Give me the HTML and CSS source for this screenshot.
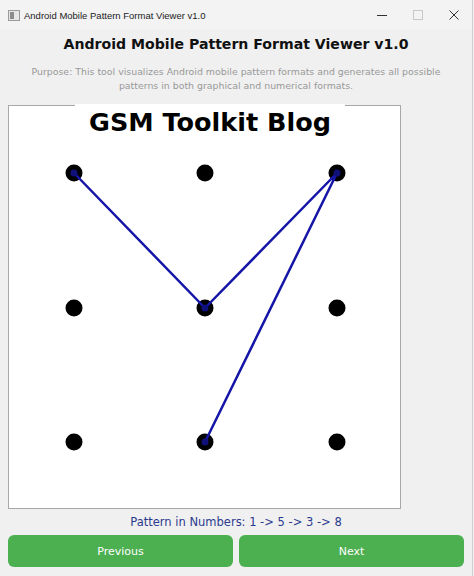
FILE: index.html
```html
<!DOCTYPE html>
<html>
<head>
<meta charset="utf-8">
<link rel="stylesheet" href="styles.css">
</head>
<body>
<div class="window">
  <div class="titlebar">
    <div class="app">
      <svg class="app-icon" width="12" height="11" viewBox="0 0 12 11">
        <rect x="0.5" y="0.5" width="11" height="10" fill="#e6e6e6" stroke="#9a9a9a"/>
        <rect x="2" y="2" width="4" height="7" fill="#8c8c8c"/>
      </svg>
      <span class="app-title">Android Mobile Pattern Format Viewer v1.0</span>
    </div>
    <div class="controls">
      <span class="ctl"><svg width="10" height="10" viewBox="0 0 10 10"><line x1="0" y1="5.5" x2="10" y2="5.5" stroke="#333" stroke-width="1"/></svg></span>
      <span class="ctl"><svg width="10" height="10" viewBox="0 0 10 10"><rect x="0.5" y="0.5" width="9" height="9" fill="none" stroke="#c8c8c8" stroke-width="1"/></svg></span>
      <span class="ctl"><svg width="10" height="10" viewBox="0 0 10 10"><path d="M0.5 0.5 L9.5 9.5 M9.5 0.5 L0.5 9.5" stroke="#333" stroke-width="1"/></svg></span>
    </div>
  </div>
  <div class="content">
    <h1 class="heading">Android Mobile Pattern Format Viewer v1.0</h1>
    <p class="purpose">Purpose: This tool visualizes Android mobile pattern formats and generates all possible patterns in both graphical and numerical formats.</p>
    <div class="canvas">
      <div class="watermark">GSM Toolkit Blog</div>
      <svg class="pattern" width="391" height="402" viewBox="0 0 391 402">
        <g fill="#000">
          <circle cx="65" cy="67" r="8.5"/>
          <circle cx="196" cy="67" r="8.5"/>
          <circle cx="328" cy="67" r="8.5"/>
          <circle cx="65" cy="202" r="8.5"/>
          <circle cx="196" cy="202" r="8.5"/>
          <circle cx="328" cy="202" r="8.5"/>
          <circle cx="65" cy="336" r="8.5"/>
          <circle cx="196" cy="336" r="8.5"/>
          <circle cx="328" cy="336" r="8.5"/>
        </g>
        <polyline points="65,67 196,202 328,67 196,336" fill="none" stroke="#1515a8" stroke-width="2.5" stroke-linejoin="round" stroke-linecap="round"/>
        <g fill="#10107a">
          <circle cx="65" cy="67" r="3.5"/>
          <circle cx="196" cy="202" r="3.5"/>
          <circle cx="328" cy="67" r="3.5"/>
          <circle cx="196" cy="336" r="3.5"/>
        </g>
      </svg>
    </div>
    <div class="numbers">Pattern in Numbers: 1 -&gt; 5 -&gt; 3 -&gt; 8</div>
    <div class="buttons">
      <button class="btn">Previous</button>
      <button class="btn">Next</button>
    </div>
  </div>
</div>
</body>
</html>
```
FILE: styles.css
```css
html, body {
  margin: 0;
  padding: 0;
  background: #f0f0f0;
}
.window {
  width: 472px;
  height: 576px;
  border-right: 1px solid #cfcfcf;
  background: #f0f0f0;
  overflow: hidden;
  font-family: "DejaVu Sans", Verdana, sans-serif;
}
.titlebar {
  height: 30px;
  display: flex;
  align-items: center;
  justify-content: space-between;
  background: #f3f3f3;
}
.app {
  display: flex;
  align-items: center;
  padding-left: 8px;
  gap: 4px;
}
.app-title {
  font-family: "Liberation Sans", Arial, sans-serif;
  font-size: 9.5px;
  color: #222;
}
.controls {
  display: flex;
  height: 30px;
}
.ctl {
  width: 36px;
  display: flex;
  align-items: center;
  justify-content: center;
}
.content {
  padding: 0 8px;
  display: flex;
  flex-direction: column;
}
.heading {
  margin: 3px 0 0 0;
  font-size: 14.1px;
  line-height: 22px;
  font-weight: bold;
  text-align: center;
  color: #111;
}
.purpose {
  margin: 10px 0 0 0;
  font-family: "DejaVu Sans", Verdana, sans-serif;
  font-size: 9.4px;
  line-height: 13.5px;
  color: #999999;
  text-align: center;
  padding: 0 20px;
}
.canvas {
  position: relative;
  margin-top: 13px;
  width: 391px;
  height: 402px;
  background: #fff;
  border: 1px solid #a8a8a8;
}
.pattern {
  display: block;
}
.watermark {
  position: absolute;
  left: 66px;
  top: -2px;
  width: 270px;
  height: 36px;
  background: #fff;
  text-align: center;
  font-family: "DejaVu Sans", Verdana, sans-serif;
  font-weight: bold;
  font-size: 25.5px;
  line-height: 36px;
  color: #000;
}
.numbers {
  margin-top: 5px;
  height: 16px;
  line-height: 16px;
  text-align: center;
  font-family: "DejaVu Sans", Tahoma, sans-serif;
  font-size: 11.5px;
  color: #2c3a8f;
}
.buttons {
  margin-top: 5px;
  display: grid;
  grid-template-columns: 1fr 1fr;
  gap: 6px;
}
.btn {
  height: 32px;
  border: none;
  border-radius: 6px;
  background: #4caf50;
  color: #fff;
  font-family: "DejaVu Sans", Tahoma, sans-serif;
  font-size: 11px;
  padding: 0;
}
```
